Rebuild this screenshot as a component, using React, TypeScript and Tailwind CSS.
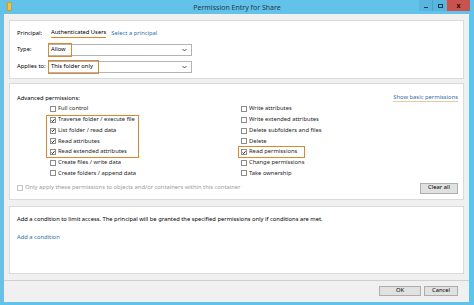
import React from 'react';

const FONT = { fontFamily: '"Noto Sans", "Open Sans", sans-serif' };

const CheckMark = () => (
  <svg viewBox="0 0 6 6" className="w-[5px] h-[5px]">
    <path d="M0.8 3.1 L2.3 4.6 L5.2 1.2" fill="none" stroke="#111" strokeWidth="1.4" />
  </svg>
);

interface CheckProps {
  label: string;
  checked?: boolean;
}

const Check = ({ label, checked }: CheckProps) => (
  <div className="flex items-center h-[10.7px] gap-[2px]">
    <span className="w-[6px] h-[6px] border border-[#8c8c8c] bg-white flex items-center justify-center shrink-0">
      {checked && <CheckMark />}
    </span>
    <span className="text-[#1e1e1e]">{label}</span>
  </div>
);

const Select = ({ children }: { children: React.ReactNode }) => (
  <div className="relative w-[144px] h-[12px] border border-[#b4b4b4] bg-white flex items-center justify-between pl-[2px] pr-[4px]">
    {children}
    <svg viewBox="0 0 6 4" className="w-[5px] h-[4px]">
      <path d="M0.6 0.8 L3 3.2 L5.4 0.8" fill="none" stroke="#333" strokeWidth="1" />
    </svg>
  </div>
);

const App = () => {
  return (
    <div className="w-[474px] h-[305px] bg-[#62c2ea] flex flex-col text-[5.8px] leading-none overflow-hidden" style={FONT}>
      {/* title bar */}
      <div className="relative h-[14px] flex items-center justify-center shrink-0">
        <div className="absolute left-[7px] top-[2px] w-[5px] h-[9px] bg-[#e8c64a] border border-[#c9a22b]" />
        <span className="text-[7px] text-[#1b3a4f]">Permission Entry for Share</span>
        <div className="absolute right-[4px] top-0 flex h-[11px]">
          <div className="w-[13px] bg-[#58b5de] flex items-end justify-center pb-[3px]">
            <span className="w-[4px] h-[1.5px] bg-[#1c3b52]" />
          </div>
          <div className="w-[15px] bg-[#58b5de] flex items-center justify-center border-l border-[#4aa3cc]">
            <span className="w-[5px] h-[4px] border-[1.5px] border-[#1c3b52]" />
          </div>
          <div className="w-[23px] bg-[#c9524c] flex items-center justify-center text-[7px] font-bold text-[#3a0b0b]">x</div>
        </div>
      </div>

      {/* body */}
      <div className="flex-1 ml-[4px] mr-[5px] mb-[3px] bg-[#f0f0f0] flex flex-col pt-[6px] px-[5px]">
        {/* principal panel */}
        <div className="bg-white border border-[#dadada] h-[59px] pl-[7px] pt-[8px] flex flex-col">
          <div className="flex items-center h-[10px]">
            <span className="w-[34px]">Principal:</span>
            <span className="border-b border-[#e0862c] pb-[1px] mr-[5px]">Authenticated Users</span>
            <span className="text-[#2f6fa6]">Select a principal</span>
          </div>
          <div className="flex items-center mt-[5px]">
            <span className="w-[31px]">Type:</span>
            <Select>
              <span className="relative">
                Allow
                <span className="absolute -left-[3px] -top-[4px] w-[24px] h-[14px] border-[1.5px] border-[#e0862c]" />
              </span>
            </Select>
          </div>
          <div className="flex items-center mt-[5px]">
            <span className="w-[31px]">Applies to:</span>
            <Select>
              <span className="relative">
                This folder only
                <span className="absolute -left-[3px] -top-[4px] w-[51px] h-[14px] border-[1.5px] border-[#e0862c]" />
              </span>
            </Select>
          </div>
        </div>

        {/* advanced permissions panel */}
        <div className="mt-[4px] bg-white border border-[#dadada] h-[117px] pl-[7px] pr-[5px] pt-[10px] flex flex-col">
          <div className="flex items-center justify-between h-[9px]">
            <span>Advanced permissions:</span>
            <span className="text-[#2f6fa6] border-b border-[#e9c9a0] pb-[1px]">Show basic permissions</span>
          </div>
          <div className="grid grid-cols-[191px_1fr] pl-[33px] mt-[1px]">
            <div className="flex flex-col">
              <Check label="Full control" />
              <div className="relative">
                <Check label="Traverse folder / execute file" checked />
                <Check label="List folder / read data" checked />
                <Check label="Read attributes" checked />
                <Check label="Read extended attributes" checked />
                <span className="absolute -left-[4px] top-[0px] w-[93px] h-[43px] border-[1.5px] border-[#e0862c]" />
              </div>
              <Check label="Create files / write data" />
              <Check label="Create folders / append data" />
            </div>
            <div className="flex flex-col">
              <Check label="Write attributes" />
              <Check label="Write extended attributes" />
              <Check label="Delete subfolders and files" />
              <Check label="Delete" />
              <div className="relative">
                <Check label="Read permissions" checked />
                <span className="absolute -left-[3px] -top-[1px] w-[67px] h-[12px] border-[1.5px] border-[#e0862c]" />
              </div>
              <Check label="Change permissions" />
              <Check label="Take ownership" />
            </div>
          </div>
          <div className="flex items-center justify-between mt-[4px]">
            <div className="flex items-center gap-[2px] text-[#9a9a9a]">
              <span className="w-[6px] h-[6px] border border-[#c4c4c4] bg-white" />
              <span>Only apply these permissions to objects and/or containers within this container</span>
            </div>
            <div className="w-[38px] h-[11px] bg-[#e1e1e1] border border-[#adadad] flex items-center justify-center">Clear all</div>
          </div>
        </div>

        {/* condition panel */}
        <div className="mt-[6px] bg-white border border-[#dadada] h-[68px] pl-[7px] pt-[10px] flex flex-col">
          <span>Add a condition to limit access. The principal will be granted the specified permissions only if conditions are met.</span>
          <span className="text-[#2f6fa6] mt-[12px]">Add a condition</span>
        </div>

        {/* footer */}
        <div className="mt-[6px] -mx-[5px] border-t border-[#cfcfcf] flex-1 flex justify-end items-start pt-[5px] pr-[11px] gap-[3px]">
          <div className="w-[42px] h-[10px] bg-[#e1e1e1] border border-[#adadad] flex items-center justify-center">OK</div>
          <div className="w-[34px] h-[10px] bg-[#e1e1e1] border border-[#adadad] flex items-center justify-center">Cancel</div>
        </div>
      </div>
    </div>
  );
};

export default App;
